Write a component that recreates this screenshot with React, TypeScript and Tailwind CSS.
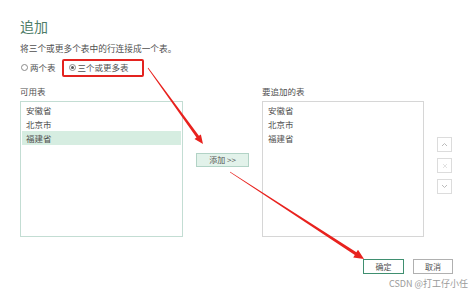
import React from "react";

const font = { fontFamily: '"Noto Sans CJK SC", "Noto Sans", sans-serif' };

function Radio({ checked }: { checked?: boolean }) {
  return (
    <span className="flex h-[7px] w-[7px] items-center justify-center rounded-full border border-[#8a8a8a] bg-white">
      {checked && <span className="h-[3px] w-[3px] rounded-full bg-[#555]" />}
    </span>
  );
}

function ListBox({ items, selected, border }: { items: string[]; selected?: number; border: string }) {
  return (
    <div className={`mt-[4px] h-[136px] border ${border} bg-white pt-[1px]`}>
      {items.map((it, i) => (
        <div
          key={it}
          className={`mx-[1px] h-[14px] pl-[4px] text-[8.5px] leading-[14px] text-[#505050] ${i === selected ? "bg-[#d6ede1]" : ""}`}
        >
          {it}
        </div>
      ))}
    </div>
  );
}

function SideBtn({ children }: { children: React.ReactNode }) {
  return (
    <div className="flex h-[15px] w-[15px] items-center justify-center border border-[#dcdcdc] bg-white">
      {children}
    </div>
  );
}

export default function App() {
  const items = ["安徽省", "北京市", "福建省"];
  return (
    <div className="relative h-[293px] w-[474px] overflow-hidden bg-white" style={font}>
      <div className="flex flex-col pl-[20px] pt-[16px]">
        <div className="h-[20px] text-[14px] leading-[20px] text-[#4f7d68]">追加</div>
        <div className="mt-[5px] h-[15px] text-[8.7px] leading-[15px] text-[#505050]">将三个或更多个表中的行连接成一个表。</div>
        <div className="mt-[3px] flex h-[17px] items-center">
          <div className="flex items-center gap-[2px] pl-[1px] text-[8.5px] text-[#505050]">
            <Radio />
            <span>两个表</span>
          </div>
          <div className="ml-[6px] flex h-[18px] w-[82px] items-center gap-[2px] rounded-[2px] border-2 border-[#e3231f] pl-[5px] text-[8.5px] text-[#505050]">
            <Radio checked />
            <span>三个或更多表</span>
          </div>
        </div>
        <div className="mt-[10px] flex">
          <div className="flex w-[163px] flex-col">
            <div className="h-[11px] text-[8.5px] leading-[11px] text-[#505050]">可用表</div>
            <ListBox items={items} selected={2} border="border-[#c3ddd3]" />
          </div>
          <div className="flex w-[79px] flex-col items-start pl-[13px] pt-[67px]">
            <div className="flex h-[14px] w-[53px] items-center justify-center border border-[#b2d3c6] bg-[#e2f2ea] text-[8px] text-[#555]">
              添加 &gt;&gt;
            </div>
          </div>
          <div className="flex w-[162px] flex-col">
            <div className="h-[11px] text-[8.5px] leading-[11px] text-[#505050]">要追加的表</div>
            <ListBox items={items} border="border-[#d6d6d6]" />
          </div>
          <div className="ml-[13px] flex flex-col gap-[5px] pt-[51px]">
            <SideBtn>
              <svg width="7" height="5" viewBox="0 0 7 5"><path d="M1 4 L3.5 1.5 L6 4" fill="none" stroke="#bbb" strokeWidth="1" /></svg>
            </SideBtn>
            <div className="mt-[1px]">
              <SideBtn>
                <svg width="6" height="6" viewBox="0 0 6 6"><path d="M1 1 L5 5 M5 1 L1 5" fill="none" stroke="#e2e2e2" strokeWidth="1" /></svg>
              </SideBtn>
            </div>
            <div className="mt-[1px]">
              <SideBtn>
                <svg width="7" height="5" viewBox="0 0 7 5"><path d="M1 1 L3.5 3.5 L6 1" fill="none" stroke="#bbb" strokeWidth="1" /></svg>
              </SideBtn>
            </div>
          </div>
        </div>
        <div className="mt-[22px] flex justify-end gap-[9px] pr-[21px]">
          <div className="flex h-[15px] w-[41px] items-center justify-center border border-[#3f8f70] bg-white text-[8px] text-[#505050]">确定</div>
          <div className="flex h-[15px] w-[40px] items-center justify-center border border-[#b0b0b0] bg-white text-[8px] text-[#505050]">取消</div>
        </div>
      </div>
      <div className="absolute left-[389px] top-[278px] text-[9px] leading-[12px] text-[#9a9a9a]">CSDN @打工仔小任</div>
      <svg className="pointer-events-none absolute left-0 top-0" width="474" height="293" viewBox="0 0 474 293">
        <polygon
          points="147.68,68.23 196.5,137.6 194.5,139.0 203,144 200.9,134.4 198.9,135.8 148.32,67.77"
          fill="#e8221e"
        />
        <polygon
          points="229.84,172.25 354.8,254.9 353.2,257.4 364,259 358.0,249.8 356.4,252.3 230.16,171.75"
          fill="#e8221e"
        />
      </svg>
    </div>
  );
}
